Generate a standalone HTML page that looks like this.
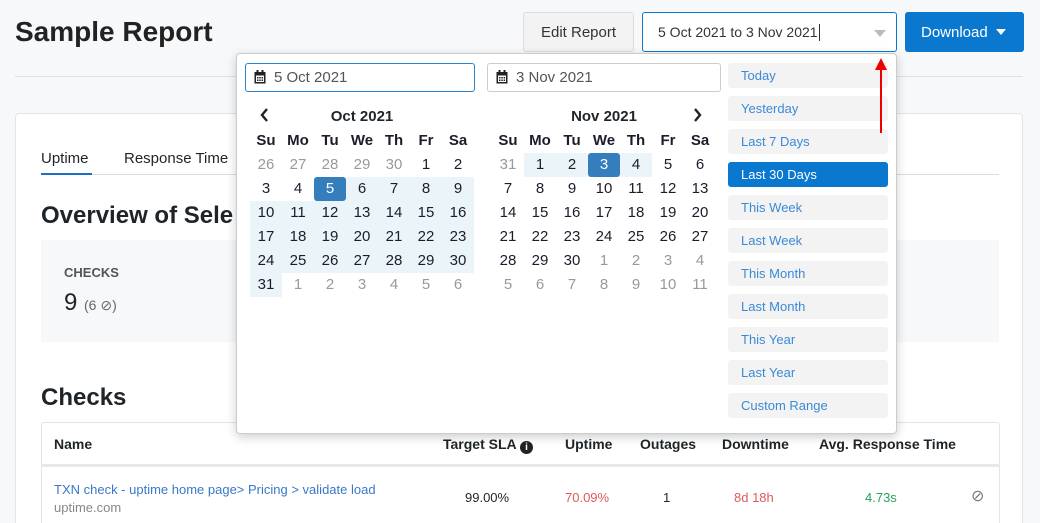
<!DOCTYPE html>
<html style="overflow:hidden;width:1040px;height:523px"><head><meta charset="utf-8"><style>
*{box-sizing:border-box;margin:0;padding:0}
body{width:1040px;height:523px;overflow:hidden;background:#f7f8fa;font-family:"Liberation Sans",sans-serif;color:#1f2428;position:relative}
.abs{position:absolute}
h1{position:absolute;left:15px;top:16px;font-size:28px;font-weight:bold;color:#222}
.btn{position:absolute;font-size:15px;display:flex;align-items:center;border-radius:3px}
.card{position:absolute;left:15px;top:113px;width:1008px;height:420px;background:#fff;border:1px solid #e2e4e8;border-radius:4px}
.pop{position:absolute;left:236px;top:53px;width:661px;height:381px;background:#fff;border:1px solid #ccc;border-radius:4px;box-shadow:0 3px 10px rgba(0,0,0,.2)}
.inp{position:absolute;top:9px;height:29px;border:1px solid #ccc;border-radius:3px;font-size:15px;color:#555;display:flex;align-items:center;padding-left:28px}
.inp svg{position:absolute;left:8px;top:6px}
.rng{position:absolute;left:491px;width:160px;height:25px;background:#f3f3f3;border-radius:3px;font-size:13px;color:#3a8ad6;padding-left:13px;line-height:25px}
.cal{position:absolute;top:97px;width:224px}
.row{display:flex;height:24px}
.row div{width:32px;text-align:center;line-height:24px;font-size:15px;color:#1c1c2c}
.hd div{font-weight:bold}
.g{color:#999!important}
.h{background:#ebf4f8}
.s{background:#357ebd;color:#fff!important;border-radius:3px}
.mt{position:absolute;top:0;width:224px;text-align:center;font-weight:bold;font-size:15px;line-height:24px}
</style></head><body>
<h1>Sample Report</h1>
<div class="abs" style="left:15px;top:76px;width:1008px;height:1px;background:#dde0e4"></div>
<div class="btn" style="left:523px;top:12px;width:111px;height:40px;background:#f3f3f3;border:1px solid #ddd;justify-content:center;color:#333">Edit Report</div>
<div class="btn" style="left:642px;top:12px;width:255px;height:40px;background:#fff;border:1px solid #0a78cf;padding-left:15px;color:#333;font-size:14px">5 Oct 2021 to 3 Nov 2021<span style="display:inline-block;width:1px;height:17px;background:#333;margin-left:1px"></span><span style="position:absolute;right:10px;top:17px;border:6px solid transparent;border-top:7px solid #bbb;border-bottom:0"></span></div>
<div class="btn" style="left:905px;top:12px;width:119px;height:40px;background:#0a78cf;color:#fff;padding-left:16px">Download<span style="margin-left:8px;border:5px solid transparent;border-top:6px solid #fff;border-bottom:0"></span></div>

<div class="card">
<div class="abs" style="left:25px;top:36px;font-size:15px">Uptime</div>
<div class="abs" style="left:108px;top:36px;font-size:15px">Response Time</div>
<div class="abs" style="left:25px;top:60px;width:958px;height:1px;background:#ddd"></div>
<div class="abs" style="left:25px;top:59px;width:51px;height:2px;background:#1a6fc0"></div>
<div class="abs" style="left:25px;top:88px;font-size:24px;font-weight:bold">Overview of Sele</div>
<div class="abs" style="left:25px;top:126px;width:958px;height:102px;background:#f7f8fa"></div>
<div class="abs" style="left:48px;top:151px;font-size:13px;color:#555;font-weight:bold">CHECKS</div>
<div class="abs" style="left:48px;top:175px;font-size:24px">9 <span style="font-size:14px;color:#666">(6 &#8856;)</span></div>
<div class="abs" style="left:25px;top:270px;font-size:24px;font-weight:bold">Checks</div>
<div class="abs" style="left:25px;top:308px;width:959px;height:120px;border:1px solid #e2e4e8;border-radius:3px"></div>
<div class="abs" style="left:25px;top:350px;width:959px;height:3px;background:#e6e8ec"></div>
<div class="abs" style="left:38px;top:322px;font-size:14px;font-weight:bold">Name</div>
<div class="abs" style="left:427px;top:322px;font-size:14px;font-weight:bold">Target SLA <span style="display:inline-block;width:13px;height:13px;border-radius:50%;background:#222;color:#fff;font-size:10px;text-align:center;line-height:13px;vertical-align:-1px">i</span></div>
<div class="abs" style="left:549px;top:322px;font-size:14px;font-weight:bold">Uptime</div>
<div class="abs" style="left:624px;top:322px;font-size:14px;font-weight:bold">Outages</div>
<div class="abs" style="left:706px;top:322px;font-size:14px;font-weight:bold">Downtime</div>
<div class="abs" style="left:803px;top:322px;font-size:14px;font-weight:bold">Avg. Response Time</div>
<div class="abs" style="left:38px;top:368px;font-size:13px;color:#3a78c8">TXN check - uptime home page&gt; Pricing &gt; validate load</div>
<div class="abs" style="left:38px;top:386px;font-size:13px;color:#888">uptime.com</div>
<div class="abs" style="left:449px;top:376px;font-size:13px">99.00%</div>
<div class="abs" style="left:549px;top:376px;font-size:13px;color:#e05a5a">70.09%</div>
<div class="abs" style="left:647px;top:376px;font-size:13px">1</div>
<div class="abs" style="left:718px;top:376px;font-size:13px;color:#e05a5a">8d 18h</div>
<div class="abs" style="left:849px;top:376px;font-size:13px;color:#2ca05a">4.73s</div>
<div class="abs" style="left:955px;top:372px;font-size:16px;color:#777">&#8856;</div>
</div>

<div class="pop">
<div class="inp" style="left:8px;width:230px;border-color:#2a85d0"><svg width="12" height="14" viewBox="0 0 12 14"><rect x="0.5" y="2" width="11" height="11.5" fill="#222"/><rect x="2" y="5.5" width="8" height="6.5" fill="#fff"/><rect x="2.5" y="0" width="2" height="3" fill="#222"/><rect x="7.5" y="0" width="2" height="3" fill="#222"/><g fill="#222"><rect x="3" y="7" width="1.5" height="1.5"/><rect x="5.3" y="7" width="1.5" height="1.5"/><rect x="7.6" y="7" width="1.5" height="1.5"/><rect x="3" y="9.5" width="1.5" height="1.5"/><rect x="5.3" y="9.5" width="1.5" height="1.5"/><rect x="7.6" y="9.5" width="1.5" height="1.5"/></g></svg>5 Oct 2021</div>
<div class="inp" style="left:250px;width:234px"><svg width="12" height="14" viewBox="0 0 12 14"><rect x="0.5" y="2" width="11" height="11.5" fill="#222"/><rect x="2" y="5.5" width="8" height="6.5" fill="#fff"/><rect x="2.5" y="0" width="2" height="3" fill="#222"/><rect x="7.5" y="0" width="2" height="3" fill="#222"/><g fill="#222"><rect x="3" y="7" width="1.5" height="1.5"/><rect x="5.3" y="7" width="1.5" height="1.5"/><rect x="7.6" y="7" width="1.5" height="1.5"/><rect x="3" y="9.5" width="1.5" height="1.5"/><rect x="5.3" y="9.5" width="1.5" height="1.5"/><rect x="7.6" y="9.5" width="1.5" height="1.5"/></g></svg>3 Nov 2021</div>

<div class="rng" style="top:9px">Today</div>
<div class="rng" style="top:42px">Yesterday</div>
<div class="rng" style="top:75px">Last 7 Days</div>
<div class="rng" style="top:108px;background:#0a78cf;color:#fff">Last 30 Days</div>
<div class="rng" style="top:141px">This Week</div>
<div class="rng" style="top:174px">Last Week</div>
<div class="rng" style="top:207px">This Month</div>
<div class="rng" style="top:240px">Last Month</div>
<div class="rng" style="top:273px">This Year</div>
<div class="rng" style="top:306px">Last Year</div>
<div class="rng" style="top:339px">Custom Range</div>

<div class="abs" style="left:22px;top:53px"><svg width="10" height="16" viewBox="0 0 10 16"><path d="M8 2L3 8l5 6" stroke="#222" stroke-width="2.4" fill="none"/></svg></div>
<div class="abs" style="left:456px;top:53px"><svg width="10" height="16" viewBox="0 0 10 16"><path d="M2 2l5 6-5 6" stroke="#222" stroke-width="2.4" fill="none"/></svg></div>
<div class="cal" style="left:13px;top:51px"><div class="mt">Oct 2021</div></div>
<div class="cal" style="left:255px;top:51px"><div class="mt">Nov 2021</div></div>

<div class="cal" style="left:13px;top:75px">
<div class="row hd"><div>Su</div><div>Mo</div><div>Tu</div><div>We</div><div>Th</div><div>Fr</div><div>Sa</div></div>
<div class="row"><div class="g">26</div><div class="g">27</div><div class="g">28</div><div class="g">29</div><div class="g">30</div><div>1</div><div>2</div></div>
<div class="row"><div>3</div><div>4</div><div class="s">5</div><div class="h">6</div><div class="h">7</div><div class="h">8</div><div class="h">9</div></div>
<div class="row h"><div>10</div><div>11</div><div>12</div><div>13</div><div>14</div><div>15</div><div>16</div></div>
<div class="row h"><div>17</div><div>18</div><div>19</div><div>20</div><div>21</div><div>22</div><div>23</div></div>
<div class="row h"><div>24</div><div>25</div><div>26</div><div>27</div><div>28</div><div>29</div><div>30</div></div>
<div class="row"><div class="h">31</div><div class="g">1</div><div class="g">2</div><div class="g">3</div><div class="g">4</div><div class="g">5</div><div class="g">6</div></div>
</div>
<div class="cal" style="left:255px;top:75px">
<div class="row hd"><div>Su</div><div>Mo</div><div>Tu</div><div>We</div><div>Th</div><div>Fr</div><div>Sa</div></div>
<div class="row"><div class="g">31</div><div class="h">1</div><div class="h">2</div><div class="s">3</div><div class="h">4</div><div>5</div><div>6</div></div>
<div class="row"><div>7</div><div>8</div><div>9</div><div>10</div><div>11</div><div>12</div><div>13</div></div>
<div class="row"><div>14</div><div>15</div><div>16</div><div>17</div><div>18</div><div>19</div><div>20</div></div>
<div class="row"><div>21</div><div>22</div><div>23</div><div>24</div><div>25</div><div>26</div><div>27</div></div>
<div class="row"><div>28</div><div>29</div><div>30</div><div class="g">1</div><div class="g">2</div><div class="g">3</div><div class="g">4</div></div>
<div class="row"><div class="g">5</div><div class="g">6</div><div class="g">7</div><div class="g">8</div><div class="g">9</div><div class="g">10</div><div class="g">11</div></div>
</div>
</div>
<div class="abs" style="left:880px;top:68px;width:2px;height:65px;background:#e00"></div>
<div class="abs" style="left:875px;top:58px;border:6px solid transparent;border-bottom:12px solid #e00;border-top:0"></div>
</body></html>
